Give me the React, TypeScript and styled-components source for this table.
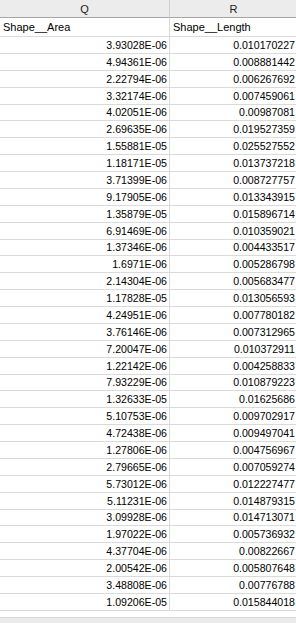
import { Fragment } from "react";
import styled, { createGlobalStyle } from "styled-components";

const areas = [
  "3.93028E-06", "4.94361E-06", "2.22794E-06", "3.32174E-06", "4.02051E-06",
  "2.69635E-06", "1.55881E-05", "1.18171E-05", "3.71399E-06", "9.17905E-06",
  "1.35879E-05", "6.91469E-06", "1.37346E-06", "1.6971E-06", "2.14304E-06",
  "1.17828E-05", "4.24951E-06", "3.76146E-06", "7.20047E-06", "1.22142E-06",
  "7.93229E-06", "1.32633E-05", "5.10753E-06", "4.72438E-06", "1.27806E-06",
  "2.79665E-06", "5.73012E-06", "5.11231E-06", "3.09928E-06", "1.97022E-06",
  "4.37704E-06", "2.00542E-06", "3.48808E-06", "1.09206E-05",
];

const lengths = [
  "0.010170227", "0.008881442", "0.006267692", "0.007459061", "0.00987081",
  "0.019527359", "0.025527552", "0.013737218", "0.008727757", "0.013343915",
  "0.015896714", "0.010359021", "0.004433517", "0.005286798", "0.005683477",
  "0.013056593", "0.007780182", "0.007312965", "0.010372911", "0.004258833",
  "0.010879223", "0.01625686", "0.009702917", "0.009497041", "0.004756967",
  "0.007059274", "0.012227477", "0.014879315", "0.014713071", "0.005736932",
  "0.00822667", "0.005807648", "0.00776788", "0.015844018",
];

const GlobalStyle = createGlobalStyle`
  html, body {
    margin: 0;
    padding: 0;
    background: #fff;
    overflow: hidden;
  }
  body {
    font-family: "Liberation Sans", Arial, sans-serif;
  }
`;

const Page = styled.div`
  width: 296px;
  height: 623px;
  display: flex;
  flex-direction: column;
  overflow: hidden;
`;

const Sheet = styled.div`
  display: grid;
  grid-template-columns: 170px 128px;
  width: 298px;
`;

const ColHead = styled.div`
  height: 18px;
  box-sizing: border-box;
  background: #ececec;
  border-bottom: 1px solid #a6a6a6;
  border-right: 1px solid #d0d0d0;
  display: flex;
  align-items: center;
  justify-content: center;
  font-size: 11px;
  color: #222;
`;

const Cell = styled.div<{ $align: "left" | "right"; $tall?: boolean }>`
  height: ${({ $tall }) => ($tall ? "19px" : "16.88px")};
  box-sizing: border-box;
  border-bottom: 1px solid #dadada;
  border-right: 1px solid #dadada;
  display: flex;
  align-items: center;
  justify-content: ${({ $align }) => ($align === "left" ? "flex-start" : "flex-end")};
  padding: 0 2px 0 3px;
  font-size: ${({ $tall }) => ($tall ? "11px" : "10.6px")};
  color: #000;
  white-space: nowrap;
  overflow: hidden;
`;

const Gap = styled.div`
  height: 6px;
  background: #fff;
`;

const ScrollBar = styled.div`
  flex: 1;
  background: #ebebeb;
  border-top: 1px solid #d6d6d6;
`;

export default function App() {
  return (
    <Page>
      <GlobalStyle />
      <Sheet>
        <ColHead>Q</ColHead>
        <ColHead>R</ColHead>
        <Cell $align="left" $tall>Shape__Area</Cell>
        <Cell $align="left" $tall>Shape__Length</Cell>
        {areas.map((a, i) => (
          <Fragment key={i}>
            <Cell $align="right">{a}</Cell>
            <Cell $align="right">{lengths[i]}</Cell>
          </Fragment>
        ))}
      </Sheet>
      <Gap />
      <ScrollBar />
    </Page>
  );
}
